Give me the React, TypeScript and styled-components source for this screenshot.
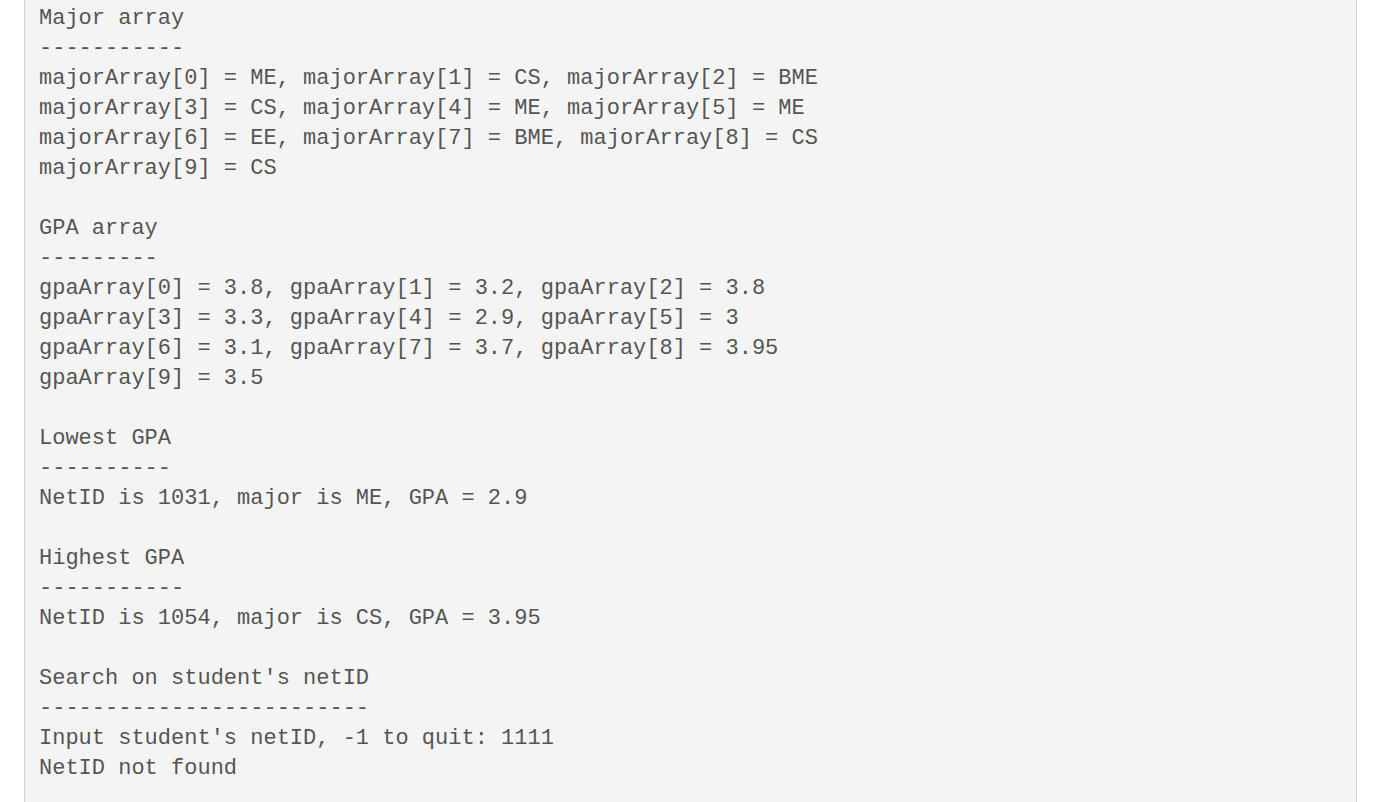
import React from "react";
import styled, { createGlobalStyle } from "styled-components";

const Global = createGlobalStyle`
  html, body { margin: 0; padding: 0; background: #ffffff; }
  body { overflow: hidden; }
`;

const Page = styled.div`
  padding: 0 37px 0 24px;
  height: 802px;
  box-sizing: border-box;
`;

const Output = styled.pre`
  margin: 0;
  height: 100%;
  box-sizing: border-box;
  background: #f4f4f4;
  border-left: 1px solid #d0d0d0;
  border-right: 1px solid #d0d0d0;
  padding: 4px 14px 0 14px;
  font-family: "Liberation Mono", "Courier New", monospace;
  font-size: 22px;
  line-height: 30px;
  color: #555555;
  white-space: pre;
  overflow: hidden;
`;

const text = `Major array
-----------
majorArray[0] = ME, majorArray[1] = CS, majorArray[2] = BME
majorArray[3] = CS, majorArray[4] = ME, majorArray[5] = ME
majorArray[6] = EE, majorArray[7] = BME, majorArray[8] = CS
majorArray[9] = CS

GPA array
---------
gpaArray[0] = 3.8, gpaArray[1] = 3.2, gpaArray[2] = 3.8
gpaArray[3] = 3.3, gpaArray[4] = 2.9, gpaArray[5] = 3
gpaArray[6] = 3.1, gpaArray[7] = 3.7, gpaArray[8] = 3.95
gpaArray[9] = 3.5

Lowest GPA
----------
NetID is 1031, major is ME, GPA = 2.9

Highest GPA
-----------
NetID is 1054, major is CS, GPA = 3.95

Search on student's netID
-------------------------
Input student's netID, -1 to quit: 1111
NetID not found`;

export default function App() {
  return (
    <>
      <Global />
      <Page>
        <Output>{text}</Output>
      </Page>
    </>
  );
}
